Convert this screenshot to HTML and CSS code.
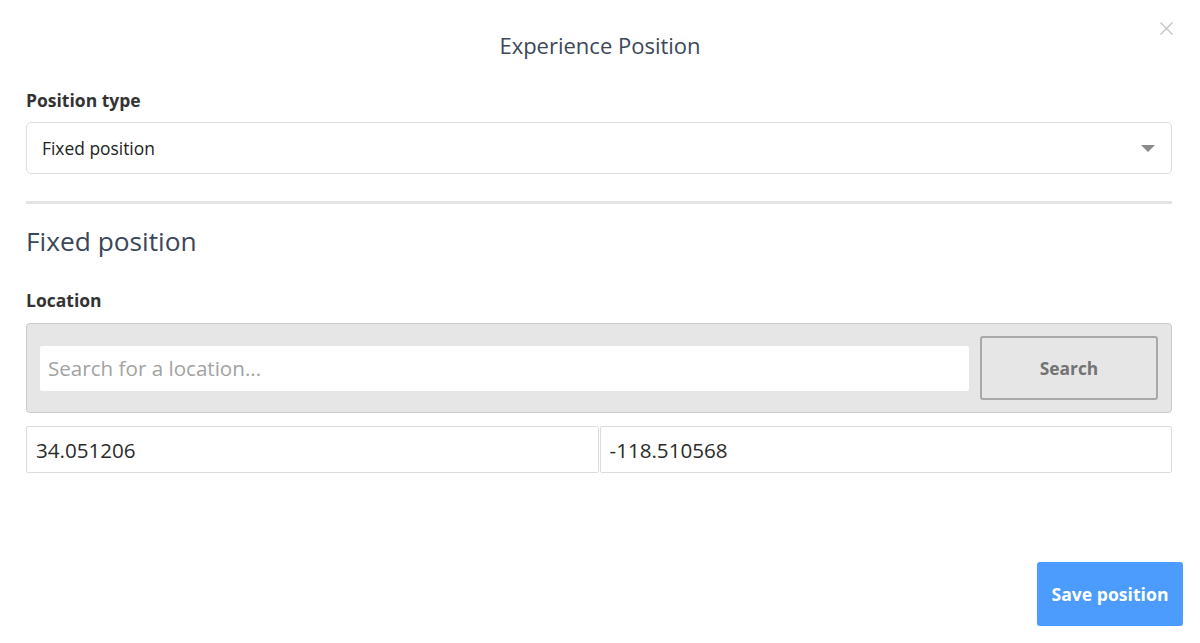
FILE: index.html
```html
<!DOCTYPE html>
<html>
<head>
<meta charset="utf-8">
<link rel="stylesheet" href="styles.css">
</head>
<body>
<div class="modal">
  <div class="modal-header">
    <h1 class="title">Experience Position</h1>
    <button class="close" aria-label="Close">
      <svg width="13" height="13" viewBox="0 0 13 13"><path d="M0.5 0.5 L12.5 12.5 M12.5 0.5 L0.5 12.5" stroke="#c4c4c4" stroke-width="1.3" fill="none"/></svg>
    </button>
  </div>
  <div class="modal-body">
    <label class="label">Position type</label>
    <div class="select">
      <span class="select-value">Fixed position</span>
      <svg class="caret" width="14" height="7" viewBox="0 0 14 7"><path d="M0 0 H14 L7 7 Z" fill="#8a8a8a"/></svg>
    </div>
    <hr class="divider">
    <h2 class="section-title">Fixed position</h2>
    <label class="label">Location</label>
    <div class="search-box">
      <div class="search-input">Search for a location...</div>
      <button class="search-btn">Search</button>
    </div>
    <div class="coords">
      <div class="coord">34.051206</div>
      <div class="coord">-118.510568</div>
    </div>
  </div>
  <div class="modal-footer">
    <button class="save-btn">Save position</button>
  </div>
</div>
</body>
</html>
```

FILE: styles.css
```css
* { box-sizing: border-box; }
html, body { margin: 0; padding: 0; background: #fff; }
body {
  font-family: "Open Sans", "Noto Sans", sans-serif;
  color: #333;
}
.modal {
  height: 643px;
  display: flex;
  flex-direction: column;
}
.modal-header {
  position: relative;
  padding-top: 31px;
  height: 76px;
}
.title {
  margin: 0;
  text-align: center;
  font-size: 22px;
  font-weight: 400;
  line-height: 28px;
  color: #3b4759;
}
.close {
  position: absolute;
  top: 22px;
  right: 27px;
  width: 13px;
  height: 13px;
  padding: 0;
  border: 0;
  background: none;
  display: flex;
}
.modal-body {
  padding: 0 28px 0 26px;
}
.label {
  display: block;
  font-size: 17.5px;
  font-weight: 700;
  line-height: 22px;
  color: #333;
}
.modal-body > .label:first-child { margin-top: 13px; }
.select {
  margin-top: 11px;
  height: 52px;
  border: 1px solid #dedede;
  border-radius: 5px;
  display: flex;
  align-items: center;
  justify-content: space-between;
  padding: 0 16px 0 15px;
}
.select-value {
  font-size: 17.4px;
  color: #222;
}
.caret { margin-top: 1px; }
.divider {
  margin: 27px 0 0;
  border: 0;
  height: 3px;
  background: #e4e4e4;
}
.section-title {
  margin: 20px 0 0;
  font-size: 26.3px;
  font-weight: 400;
  line-height: 34px;
  color: #3b4759;
}
.section-title + .label { margin-top: 31px; }
.search-box {
  margin-top: 12px;
  background: #e6e6e6;
  border: 1px solid #cacaca;
  border-radius: 4px;
  padding: 12px 13px 12px 13px;
  display: flex;
  align-items: center;
  gap: 11px;
}
.search-input {
  flex: 1;
  height: 45px;
  background: #fff;
  border-radius: 2px;
  display: flex;
  align-items: center;
  padding-left: 8px;
  font-size: 20.6px;
  color: #a2a2a2;
}
.search-btn {
  width: 178px;
  height: 64px;
  border: 2px solid #a8a8a8;
  border-radius: 3px;
  background: #e6e6e6;
  font-family: inherit;
  font-size: 17.4px;
  font-weight: 700;
  color: #737373;
}
.coords {
  margin-top: 13px;
  display: flex;
  gap: 1px;
}
.coord {
  flex: 1;
  height: 47px;
  border: 1px solid #dcdcdc;
  border-radius: 2px;
  display: flex;
  align-items: center;
  padding-left: 9px;
  font-size: 20.6px;
  color: #2b2b2b;
}
.modal-footer {
  margin-top: auto;
  display: flex;
  justify-content: flex-end;
  padding: 0 17px 17px 0;
}
.save-btn {
  width: 146px;
  height: 64px;
  border: 0;
  border-radius: 3px;
  background: #4b9cfd;
  color: #fff;
  font-family: inherit;
  font-size: 17.6px;
  font-weight: 700;
}
```
